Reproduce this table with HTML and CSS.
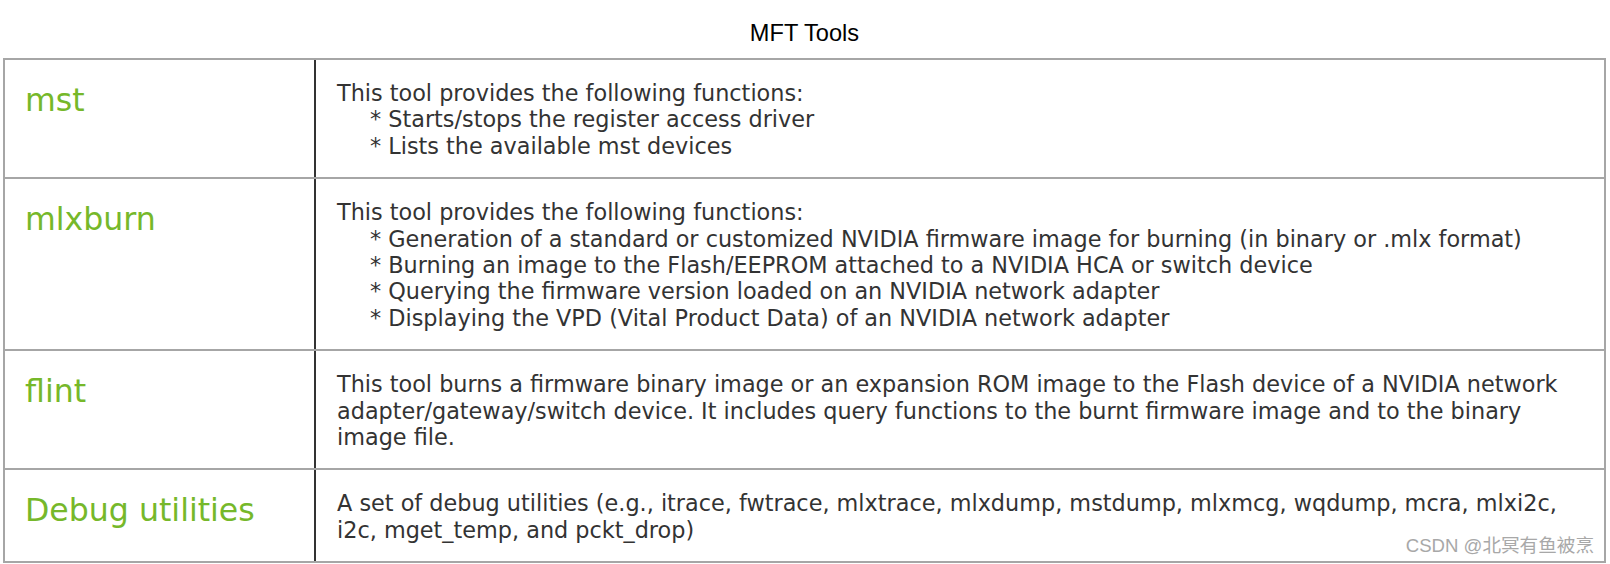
FILE: index.html
```html
<!DOCTYPE html>
<html lang="en">
<head>
<meta charset="utf-8">
<title>MFT Tools</title>
<link rel="stylesheet" href="styles.css">
</head>
<body>
<div class="page">
  <div class="caption">MFT Tools</div>
  <div class="table">
    <div class="row">
      <div class="name">mst</div>
      <div class="desc">
        <div class="line">This tool provides the following functions:</div>
        <div class="line bullet">* Starts/stops the register access driver</div>
        <div class="line bullet">* Lists the available mst devices</div>
      </div>
    </div>
    <div class="row">
      <div class="name">mlxburn</div>
      <div class="desc">
        <div class="line">This tool provides the following functions:</div>
        <div class="line bullet">* Generation of a standard or customized NVIDIA firmware image for burning (in binary or .mlx format)</div>
        <div class="line bullet">* Burning an image to the Flash/EEPROM attached to a NVIDIA HCA or switch device</div>
        <div class="line bullet">* Querying the firmware version loaded on an NVIDIA network adapter</div>
        <div class="line bullet">* Displaying the VPD (Vital Product Data) of an NVIDIA network adapter</div>
      </div>
    </div>
    <div class="row">
      <div class="name">flint</div>
      <div class="desc">
        <div class="line">This tool burns a firmware binary image or an expansion ROM image to the Flash device of a NVIDIA network</div>
        <div class="line">adapter/gateway/switch device. It includes query functions to the burnt firmware image and to the binary</div>
        <div class="line">image file.</div>
      </div>
    </div>
    <div class="row">
      <div class="name">Debug utilities</div>
      <div class="desc">
        <div class="line">A set of debug utilities (e.g., itrace, fwtrace, mlxtrace, mlxdump, mstdump, mlxmcg, wqdump, mcra, mlxi2c,</div>
        <div class="line">i2c, mget_temp, and pckt_drop)</div>
      </div>
    </div>
    <div class="watermark">CSDN @北冥有鱼被烹</div>
  </div>
</div>
</body>
</html>
```

FILE: styles.css
```css
html, body {
  margin: 0;
  padding: 0;
  background: #ffffff;
}

.page {
  padding: 0 4px 0 3px;
}

.caption {
  font-family: "Liberation Sans", Arial, sans-serif;
  font-size: 23.6px;
  line-height: 26px;
  color: #000000;
  text-align: center;
  padding: 20px 0 12px;
}

.table {
  position: relative;
  border: 2px solid #a6a6a6;
}

.row {
  display: grid;
  grid-template-columns: 311px 1fr;
  border-top: 2px solid #a6a6a6;
}

.row:first-child {
  border-top: none;
}

.name {
  border-right: 2px solid #333333;
  padding: 21px 20px 17px;
  font-family: "DejaVu Sans", Verdana, sans-serif;
  font-size: 31.6px;
  line-height: 39px;
  color: #76b82a;
}

.desc {
  padding: 20px 21px 18px;
  font-family: "DejaVu Sans", Verdana, sans-serif;
  font-size: 22.35px;
  line-height: 26.4px;
  color: #333333;
}

.line {
  white-space: nowrap;
}

.bullet {
  padding-left: 33px;
}

.watermark {
  position: absolute;
  right: 10px;
  bottom: 5px;
  font-family: "Liberation Sans", "Noto Sans CJK SC", sans-serif;
  font-size: 18.6px;
  line-height: 20px;
  color: #a8a8a8;
}
```
